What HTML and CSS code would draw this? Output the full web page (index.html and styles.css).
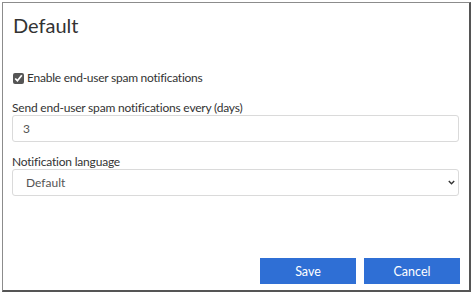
FILE: index.html
```html
<!DOCTYPE html>
<html>
<head>
    <title>Default</title>
    <link rel="stylesheet" href="styles.css">
</head>
<body>
    <!-- Settings panel -->
    <div class="panel">
        <h2 class="panel-title">Default</h2>

        <!-- Enable checkbox -->
        <label class="check-row">
            <input type="checkbox" checked>
            <span>Enable end-user spam notifications</span>
        </label>

        <!-- Frequency field -->
        <div class="form-field">
            <label for="days">Send end-user spam notifications every (days)</label>
            <input type="text" id="days" value="3">
        </div>

        <!-- Language field -->
        <div class="form-field">
            <label for="lang">Notification language</label>
            <div class="select-wrap">
                <select id="lang">
                    <option>Default</option>
                </select>
                <svg class="chevron" width="7" height="5" viewBox="0 0 7 5">
                    <path d="M0.8 1l2.7 2.7 2.7-2.7" fill="none" stroke="#333" stroke-width="1.4"/>
                </svg>
            </div>
        </div>

        <div class="form-actions">
            <button class="btn">Save</button>
            <button class="btn">Cancel</button>
        </div>
    </div>
</body>
</html>
```

FILE: styles.css
```css
/* Page */
body {
    margin: 0;
    background-color: #ffffff;
    font-family: Lato, 'Open Sans', Arial, sans-serif;
    color: #333333;
}

/* Panel with dark frame */
.panel {
    box-sizing: border-box;
    margin: 2px 0 0 2px;
    width: 469px;
    height: 290px;
    border: 1px solid #8c8c8c;
    border-right: 2px solid #555555;
    border-bottom: 2px solid #555555;
    padding: 8px 9px 6px 9px;
    display: flex;
    flex-direction: column;
}

.panel-title {
    margin: 0 0 0 1px;
    font-size: 20px;
    font-weight: 400;
    line-height: 28px;
    color: #333333;
}

/* Checkbox row */
.check-row {
    display: flex;
    align-items: center;
    margin-top: 31px;
    font-size: 12px;
    line-height: 16px;
    letter-spacing: -0.25px;
}

.check-row input {
    width: 11px;
    height: 11px;
    margin: 0 3px 0 1px;
    accent-color: #555555;
}

/* Form fields */
.form-field {
    margin-top: 15px;
}

.form-field label {
    display: block;
    font-size: 12px;
    line-height: 14px;
    letter-spacing: -0.2px;
}

.form-field input,
.form-field select {
    box-sizing: border-box;
    display: block;
    width: 447px;
    height: 27px;
    border: 1px solid #dadada;
    border-radius: 3px;
    background: #ffffff;
    font-family: inherit;
    font-size: 12px;
    color: #555555;
    padding: 0 10px;
    outline: none;
}

.form-field + .form-field {
    margin-top: 13px;
}

.select-wrap {
    position: relative;
    width: 447px;
}

.form-field select {
    appearance: none;
    padding-left: 13px;
}

.chevron {
    position: absolute;
    right: 4px;
    top: 11px;
}

/* Buttons */
.form-actions {
    margin-top: auto;
    display: flex;
    justify-content: flex-end;
    gap: 8px;
}

.btn {
    width: 96px;
    height: 26px;
    border: none;
    background-color: #2f6fd5;
    color: #ffffff;
    font-family: inherit;
    font-size: 12.5px;
    cursor: pointer;
}
```
